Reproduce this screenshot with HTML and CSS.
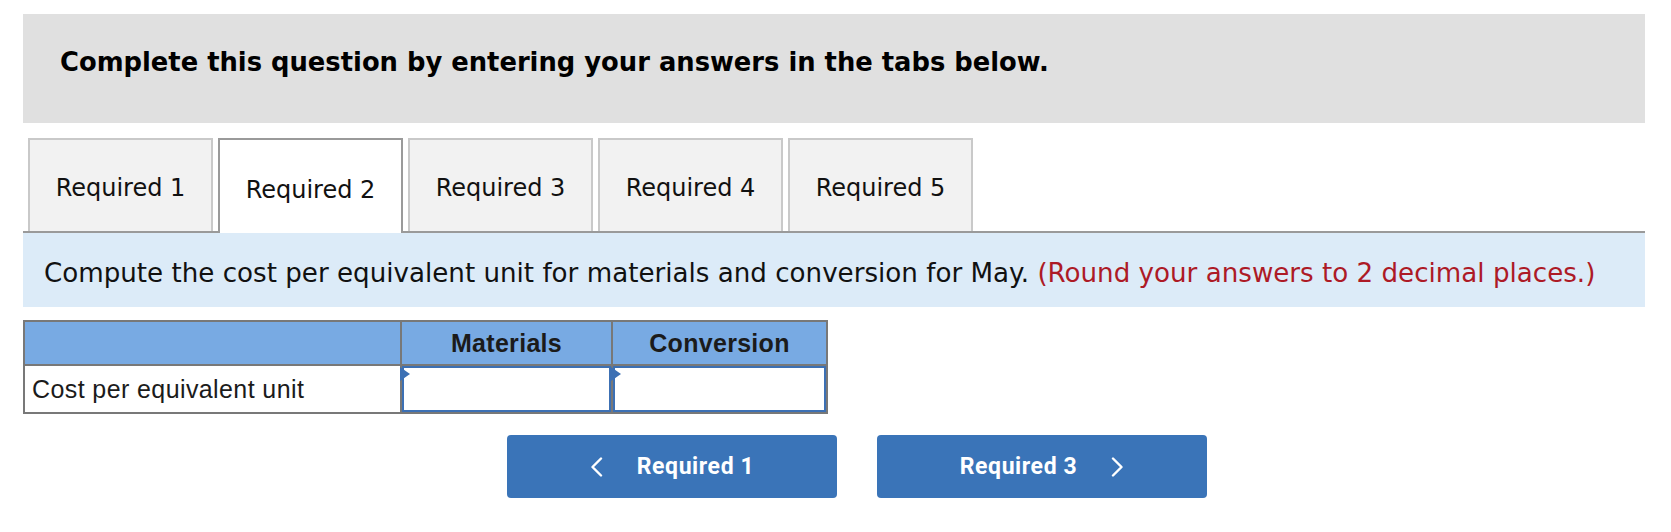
FILE: index.html
```html
<!DOCTYPE html>
<html lang="en">
<head>
<meta charset="utf-8">
<title>Required 2</title>
<link rel="stylesheet" href="styles.css">
</head>
<body>
<div class="page">
  <div class="prompt">Complete this question by entering your answers in the tabs below.</div>

  <div class="tabs">
    <div class="tab">Required 1</div>
    <div class="tab active">Required 2</div>
    <div class="tab">Required 3</div>
    <div class="tab">Required 4</div>
    <div class="tab">Required 5</div>
  </div>

  <div class="instruction">Compute the cost per equivalent unit for materials and conversion for May.&nbsp;<span class="note">(Round your answers to 2 decimal places.)</span></div>

  <div class="grid">
    <div class="cell head first"></div>
    <div class="cell head mid">Materials</div>
    <div class="cell head last">Conversion</div>
    <div class="cell label first">Cost per equivalent unit</div>
    <div class="cell input-cell mid"><div class="inp"></div></div>
    <div class="cell input-cell last"><div class="inp"></div></div>
  </div>

  <div class="nav">
    <div class="btn">
      <svg class="chev" width="13" height="20" viewBox="0 0 13 20"><polyline points="11,1.5 2.5,10 11,18.5" fill="none" stroke="#fff" stroke-width="2.4" stroke-linecap="round" stroke-linejoin="round"/></svg>
      <span>Required 1</span>
    </div>
    <div class="btn">
      <span>Required 3</span>
      <svg class="chev" width="13" height="20" viewBox="0 0 13 20"><polyline points="2,1.5 10.5,10 2,18.5" fill="none" stroke="#fff" stroke-width="2.4" stroke-linecap="round" stroke-linejoin="round"/></svg>
    </div>
  </div>
</div>
</body>
</html>
```

FILE: styles.css
```css
html, body {
  margin: 0;
  padding: 0;
  background: #ffffff;
}

.page {
  margin: 14px 26px 0 23px;
}

.prompt {
  background: #e0e0e0;
  height: 109px;
  box-sizing: border-box;
  padding: 33px 0 0 37px;
  font-family: "DejaVu Sans", Verdana, sans-serif;
  font-weight: bold;
  font-size: 25.8px;
  line-height: 30px;
  color: #000;
}

.tabs {
  display: flex;
  align-items: flex-end;
  gap: 5px;
  margin-top: 15px;
  padding-left: 5px;
  border-bottom: 2px solid #9a9a9a;
}

.tab {
  width: 185px;
  height: 93px;
  box-sizing: border-box;
  border: 2px solid #c9c9c9;
  border-bottom: none;
  background: #f2f2f2;
  display: flex;
  align-items: center;
  justify-content: center;
  padding-top: 5px;
  font-family: "DejaVu Sans", Verdana, sans-serif;
  font-size: 24px;
  color: #111;
}

.tab.active {
  height: 95px;
  margin-bottom: -2px;
  background: #ffffff;
  border-color: #9a9a9a;
  padding-top: 7px;
}

.instruction {
  height: 74px;
  box-sizing: border-box;
  background: #dcebf8;
  display: flex;
  align-items: center;
  padding: 5px 0 0 21px;
  font-family: "DejaVu Sans", Verdana, sans-serif;
  font-size: 26.15px;
  color: #111;
  white-space: nowrap;
}

.note {
  color: #ad1a26;
}

.grid {
  display: grid;
  grid-template-columns: 377px 211px 213px;
  grid-template-rows: 44px 46px;
  width: max-content;
  margin-top: 13px;
  border: 2px solid #787878;
  font-family: "Liberation Sans", Arial, sans-serif;
}

.cell {
  box-sizing: border-box;
}

.cell.first,
.cell.mid {
  border-right: 2px solid #787878;
}

.cell.head {
  background: #78aae3;
  border-bottom: 2px solid #787878;
  display: flex;
  align-items: center;
  justify-content: center;
  font-weight: bold;
  font-size: 25px;
  letter-spacing: 0.3px;
  color: #1b1b1b;
  padding-top: 1px;
}

.cell.label {
  display: flex;
  align-items: center;
  padding-left: 7px;
  font-size: 25px;
  letter-spacing: 0.4px;
  color: #1b1b1b;
}

.input-cell {
  background: #ffffff;
}

.inp {
  position: relative;
  height: 100%;
  box-sizing: border-box;
  border: 2px solid #3c70b4;
  background: #fff;
}

.inp::before {
  content: "";
  position: absolute;
  left: -4px;
  top: -1px;
  z-index: 1;
  border-left: 10px solid #3c70b4;
  border-top: 7px solid transparent;
  border-bottom: 7px solid transparent;
}

.nav {
  display: flex;
  gap: 40px;
  margin-top: 21px;
  padding-left: 484px;
}

.btn {
  width: 330px;
  height: 63px;
  box-sizing: border-box;
  background: #3a74b8;
  border-radius: 4px;
  display: flex;
  align-items: center;
  justify-content: center;
  gap: 34px;
  color: #ffffff;
  font-family: Roboto, "Liberation Sans", sans-serif;
  font-weight: 700;
  font-size: 23px;
  letter-spacing: 0.6px;
}

.chev {
  display: block;
}
```
